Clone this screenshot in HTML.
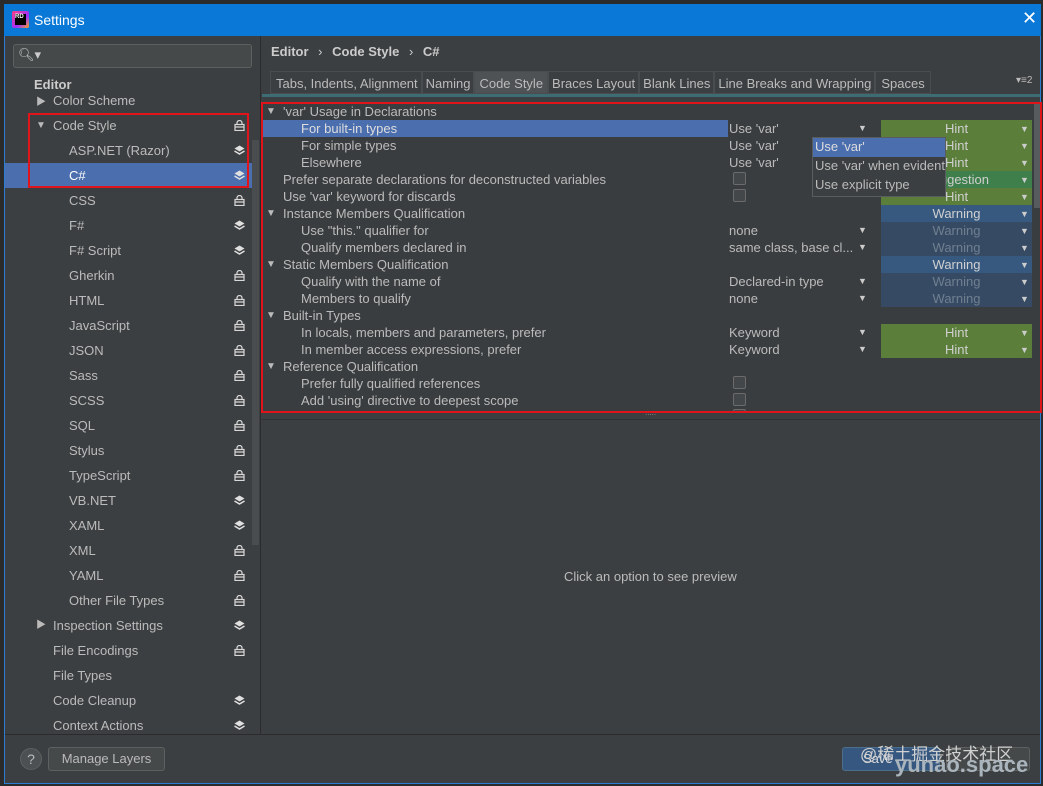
<!DOCTYPE html>
<html><head><meta charset="utf-8">
<style>
*{margin:0;padding:0;box-sizing:border-box}
body{width:1043px;height:786px;background:#2b2b2b;font-family:"Liberation Sans","Noto Sans CJK SC",sans-serif;font-size:13px;color:#bbbbbb;position:relative;overflow:hidden}
.a{position:absolute;white-space:nowrap}
.win{position:absolute;left:4px;top:4px;width:1037px;height:780px;background:#3c3f41;border:1px solid #2d7dd2}
.title{position:absolute;left:4px;top:4px;width:1037px;height:32px;background:#0a78d7;color:#fff;font-size:14px}
.side{position:absolute;left:5px;top:36px;width:255px;height:698px;background:#3c3f41}
.tr{position:absolute;left:5px;width:247px;height:25px;line-height:25px}
.ic{position:absolute;right:7px;top:7px;width:11px;height:11px}
.row{position:absolute;left:263px;width:770px;height:17px;line-height:17px}
.sev{position:absolute;left:881px;width:151px;height:17px;line-height:17px;text-align:center;color:#d0d0d0}
.arr{position:absolute;font-size:9px;color:#ccc}
.cb{position:absolute;left:733px;width:13px;height:13px;border:1px solid #6b6b6b;border-radius:2px;background:#43474a}
</style></head><body>
<svg width="0" height="0" style="position:absolute"><defs>
<symbol id="lk" viewBox="0 0 11 11"><rect x="1" y="4.5" width="9" height="6" fill="none" stroke="#d8d8d8" stroke-width="1.2"/><path d="M3 4.5V3a2.5 2.5 0 0 1 5 0v1.5M1 7h9" fill="none" stroke="#d8d8d8" stroke-width="1.2"/></symbol>
<symbol id="ly" viewBox="0 0 11 11"><path d="M5.5 0.5L10.5 3.5L5.5 6.5L0.5 3.5Z" fill="#e0e0e0"/><path d="M0.5 6L5.5 9L10.5 6" fill="none" stroke="#e0e0e0" stroke-width="1.5"/></symbol>
</defs></svg>
<div class="win"></div>
<div class="title"><div class="a" style="left:8px;top:7px;width:17px;height:17px;background:linear-gradient(135deg,#ff3d7f,#9b30ff 60%,#f7a21b);border-radius:2px"></div><div class="a" style="left:11px;top:10px;width:11px;height:11px;background:#000;color:#fff;font-size:6px;font-weight:bold;line-height:7px">RD</div><div class="a" style="left:30px;top:8px">Settings</div><div class="a" style="left:1018px;top:4px;font-size:18px">✕</div></div>

<div class="side"></div>
<div class="a" style="left:13px;top:44px;width:239px;height:24px;border:1px solid #5e6060;border-radius:3px;background:#45494a"></div>
<div class="a" style="left:18px;top:47px;color:#ccc;font-size:13px">🔍︎▾</div>
<div class="a" style="left:252px;top:140px;width:7px;height:405px;background:#4a4d50"></div>

<div class="a" style="left:34px;top:77px;font-weight:bold;color:#ccc">Editor</div>
<div class="a" style="left:36px;top:93px;font-size:10px">▶</div><div class="a" style="left:53px;top:93px">Color Scheme</div>
<div class="tr" style="top:113px"><span class="a" style="left:31px;font-size:10px">▼</span><span class="a" style="left:48px">Code Style</span><svg class="ic"><use href="#lk"/></svg></div>
<div class="tr" style="top:138px"><span class="a" style="left:64px">ASP.NET (Razor)</span><svg class="ic"><use href="#ly"/></svg></div>
<div class="tr" style="top:163px;background:#4b6eaf;width:247px"><span class="a" style="left:64px;color:#fff">C#</span><svg class="ic"><use href="#ly"/></svg></div>
<div class="tr" style="top:188px"><span class="a" style="left:64px">CSS</span><svg class="ic"><use href="#lk"/></svg></div>
<div class="tr" style="top:213px"><span class="a" style="left:64px">F#</span><svg class="ic"><use href="#ly"/></svg></div>
<div class="tr" style="top:238px"><span class="a" style="left:64px">F# Script</span><svg class="ic"><use href="#ly"/></svg></div>
<div class="tr" style="top:263px"><span class="a" style="left:64px">Gherkin</span><svg class="ic"><use href="#lk"/></svg></div>
<div class="tr" style="top:288px"><span class="a" style="left:64px">HTML</span><svg class="ic"><use href="#lk"/></svg></div>
<div class="tr" style="top:313px"><span class="a" style="left:64px">JavaScript</span><svg class="ic"><use href="#lk"/></svg></div>
<div class="tr" style="top:338px"><span class="a" style="left:64px">JSON</span><svg class="ic"><use href="#lk"/></svg></div>
<div class="tr" style="top:363px"><span class="a" style="left:64px">Sass</span><svg class="ic"><use href="#lk"/></svg></div>
<div class="tr" style="top:388px"><span class="a" style="left:64px">SCSS</span><svg class="ic"><use href="#lk"/></svg></div>
<div class="tr" style="top:413px"><span class="a" style="left:64px">SQL</span><svg class="ic"><use href="#lk"/></svg></div>
<div class="tr" style="top:438px"><span class="a" style="left:64px">Stylus</span><svg class="ic"><use href="#lk"/></svg></div>
<div class="tr" style="top:463px"><span class="a" style="left:64px">TypeScript</span><svg class="ic"><use href="#lk"/></svg></div>
<div class="tr" style="top:488px"><span class="a" style="left:64px">VB.NET</span><svg class="ic"><use href="#ly"/></svg></div>
<div class="tr" style="top:513px"><span class="a" style="left:64px">XAML</span><svg class="ic"><use href="#ly"/></svg></div>
<div class="tr" style="top:538px"><span class="a" style="left:64px">XML</span><svg class="ic"><use href="#lk"/></svg></div>
<div class="tr" style="top:563px"><span class="a" style="left:64px">YAML</span><svg class="ic"><use href="#lk"/></svg></div>
<div class="tr" style="top:588px"><span class="a" style="left:64px">Other File Types</span><svg class="ic"><use href="#lk"/></svg></div>
<div class="tr" style="top:613px"><span class="a" style="left:31px;font-size:10px">▶</span><span class="a" style="left:48px">Inspection Settings</span><svg class="ic"><use href="#ly"/></svg></div>
<div class="tr" style="top:638px"><span class="a" style="left:48px">File Encodings</span><svg class="ic"><use href="#lk"/></svg></div>
<div class="tr" style="top:663px"><span class="a" style="left:48px">File Types</span></div>
<div class="tr" style="top:688px"><span class="a" style="left:48px">Code Cleanup</span><svg class="ic"><use href="#ly"/></svg></div>
<div class="tr" style="top:713px"><span class="a" style="left:48px">Context Actions</span><svg class="ic"><use href="#ly"/></svg></div>
<div class="a" style="left:28px;top:113px;width:221px;height:75px;border:2px solid #e0141b"></div>

<div class="a" style="left:260px;top:36px;width:1px;height:698px;background:#2b2b2b"></div>
<div class="a" style="left:271px;top:44px;font-weight:bold;color:#ccc">Editor <span style="font-weight:normal;margin:0 6px">›</span> Code Style <span style="font-weight:normal;margin:0 6px">›</span> C#</div>

<div class="a" style="left:270px;top:71px;height:23px;line-height:23px;display:flex;font-size:13px">
<span style="padding:0 3px 0 5px;border:1px solid #4a4d4f">Tabs, Indents, Alignment</span><span style="padding:0 3px;border:1px solid #4a4d4f">Naming</span><span style="padding:0 4px;border:1px solid #4a4d4f;background:#4e5254">Code Style</span><span style="padding:0 3px;border:1px solid #4a4d4f">Braces Layout</span><span style="padding:0 3px;border:1px solid #4a4d4f">Blank Lines</span><span style="padding:0 3px;border:1px solid #4a4d4f">Line Breaks and Wrapping</span><span style="padding:0 5px;border:1px solid #4a4d4f">Spaces</span></div>
<div class="a" style="left:1016px;top:75px;font-size:10px">▾≡2</div>
<div class="a" style="left:262px;top:94px;width:778px;height:3px;background:#3d6c75"></div>

<div class="a" style="left:262px;top:103px;width:778px;height:310px;background:#3a3d3f"></div>
<div class="a" style="left:1034px;top:103px;width:6px;height:105px;background:#585b5d"></div>

<div class="row" style="top:103px"><span class="a" style="left:3px;font-size:10px">▼</span><span class="a" style="left:20px">'var' Usage in Declarations</span></div>
<div class="row" style="top:120px"><span class="a" style="left:0;width:465px;height:17px;background:#4b6eaf"></span><span class="a" style="left:38px;color:#ddd">For built-in types</span><span class="a" style="left:466px">Use 'var'</span><span class="arr" style="left:595px">▼</span></div>
<div class="row" style="top:137px"><span class="a" style="left:38px">For simple types</span><span class="a" style="left:466px">Use 'var'</span></div>
<div class="row" style="top:154px"><span class="a" style="left:38px">Elsewhere</span><span class="a" style="left:466px">Use 'var'</span></div>
<div class="row" style="top:171px"><span class="a" style="left:20px">Prefer separate declarations for deconstructed variables</span></div>
<div class="row" style="top:188px"><span class="a" style="left:20px">Use 'var' keyword for discards</span></div>
<div class="row" style="top:205px"><span class="a" style="left:3px;font-size:10px">▼</span><span class="a" style="left:20px">Instance Members Qualification</span></div>
<div class="row" style="top:222px"><span class="a" style="left:38px">Use "this." qualifier for</span><span class="a" style="left:466px">none</span><span class="arr" style="left:595px">▼</span></div>
<div class="row" style="top:239px"><span class="a" style="left:38px">Qualify members declared in</span><span class="a" style="left:466px">same class, base cl...</span><span class="arr" style="left:595px">▼</span></div>
<div class="row" style="top:256px"><span class="a" style="left:3px;font-size:10px">▼</span><span class="a" style="left:20px">Static Members Qualification</span></div>
<div class="row" style="top:273px"><span class="a" style="left:38px">Qualify with the name of</span><span class="a" style="left:466px">Declared-in type</span><span class="arr" style="left:595px">▼</span></div>
<div class="row" style="top:290px"><span class="a" style="left:38px">Members to qualify</span><span class="a" style="left:466px">none</span><span class="arr" style="left:595px">▼</span></div>
<div class="row" style="top:307px"><span class="a" style="left:3px;font-size:10px">▼</span><span class="a" style="left:20px">Built-in Types</span></div>
<div class="row" style="top:324px"><span class="a" style="left:38px">In locals, members and parameters, prefer</span><span class="a" style="left:466px">Keyword</span><span class="arr" style="left:595px">▼</span></div>
<div class="row" style="top:341px"><span class="a" style="left:38px">In member access expressions, prefer</span><span class="a" style="left:466px">Keyword</span><span class="arr" style="left:595px">▼</span></div>
<div class="row" style="top:358px"><span class="a" style="left:3px;font-size:10px">▼</span><span class="a" style="left:20px">Reference Qualification</span></div>
<div class="row" style="top:375px"><span class="a" style="left:38px">Prefer fully qualified references</span></div>
<div class="row" style="top:392px"><span class="a" style="left:38px">Add 'using' directive to deepest scope</span></div>
<div class="cb" style="top:172px"></div><div class="cb" style="top:189px"></div><div class="cb" style="top:376px"></div><div class="cb" style="top:393px"></div><div class="cb" style="top:409px;height:4px;border-bottom:none"></div>

<div class="sev" style="top:120px;background:#5b7f3b">Hint</div>
<div class="sev" style="top:137px;background:#5b7f3b">Hint</div>
<div class="sev" style="top:154px;background:#5b7f3b">Hint</div>
<div class="sev" style="top:171px;background:#3e7f4c">Suggestion</div>
<div class="sev" style="top:188px;background:#5b7f3b">Hint</div>
<div class="sev" style="top:205px;background:#37597f">Warning</div>
<div class="sev" style="top:222px;background:#364b63;color:#6f7f90">Warning</div>
<div class="sev" style="top:239px;background:#364b63;color:#6f7f90">Warning</div>
<div class="sev" style="top:256px;background:#37597f">Warning</div>
<div class="sev" style="top:273px;background:#364b63;color:#6f7f90">Warning</div>
<div class="sev" style="top:290px;background:#364b63;color:#6f7f90">Warning</div>
<div class="sev" style="top:324px;background:#5b7f3b">Hint</div>
<div class="sev" style="top:341px;background:#5b7f3b">Hint</div>
<div class="arr" style="left:1020px;top:124px">▼</div><div class="arr" style="left:1020px;top:141px">▼</div><div class="arr" style="left:1020px;top:158px">▼</div><div class="arr" style="left:1020px;top:175px">▼</div><div class="arr" style="left:1020px;top:192px">▼</div><div class="arr" style="left:1020px;top:209px">▼</div><div class="arr" style="left:1020px;top:226px">▼</div><div class="arr" style="left:1020px;top:243px">▼</div><div class="arr" style="left:1020px;top:260px">▼</div><div class="arr" style="left:1020px;top:277px">▼</div><div class="arr" style="left:1020px;top:294px">▼</div><div class="arr" style="left:1020px;top:328px">▼</div><div class="arr" style="left:1020px;top:345px">▼</div>

<div class="a" style="left:812px;top:137px;width:134px;height:60px;background:#3c3f41;border:1px solid #5a5d5f"></div>
<div class="a" style="left:813px;top:138px;width:132px;height:19px;background:#4b6eaf"></div>
<div class="a" style="left:815px;top:139px;color:#ddd">Use 'var'</div>
<div class="a" style="left:815px;top:158px">Use 'var' when evident</div>
<div class="a" style="left:815px;top:177px">Use explicit type</div>

<div class="a" style="left:261px;top:102px;width:781px;height:311px;border:2px solid #e0141b"></div>
<div class="a" style="left:645px;top:408px;font-size:8px;color:#999">.....</div>
<div class="a" style="left:262px;top:419px;width:778px;height:1px;background:#2f3133"></div>
<div class="a" style="left:564px;top:569px">Click an option to see preview</div>

<div class="a" style="left:5px;top:734px;width:1035px;height:1px;background:#2b2b2b"></div>
<div class="a" style="left:20px;top:748px;width:22px;height:22px;border-radius:50%;background:#4c5052;border:1px solid #5e6060;text-align:center;line-height:20px;font-size:14px">?</div>
<div class="a" style="left:48px;top:747px;width:117px;height:24px;border:1px solid #5e6060;border-radius:3px;background:#45494a;text-align:center;line-height:22px">Manage Layers</div>
<div class="a" style="left:842px;top:747px;width:98px;height:24px;background:#365880;border:1px solid #4c708c;border-radius:3px;line-height:22px;padding-left:20px;color:#ddd">Save</div>
<div class="a" style="left:946px;top:747px;width:84px;height:24px;border:1px solid #5e6060;border-radius:3px;background:#45494a"></div>
<div class="a" style="left:860px;top:740px;font-size:17px;color:#d0d0d0">@稀土掘金技术社区</div>
<div class="a" style="left:895px;top:752px;font-size:22px;font-weight:bold;color:#aab4bc">yunao.space</div>
</body></html>
